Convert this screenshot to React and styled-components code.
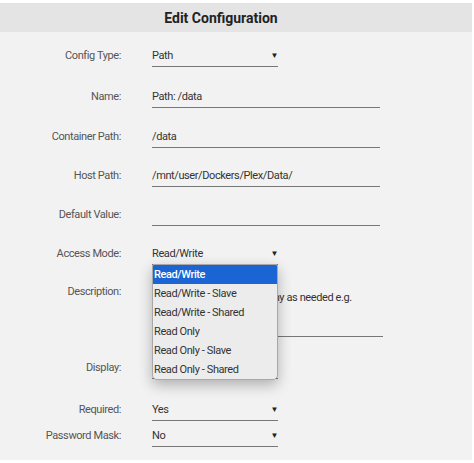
import React from 'react';
import styled, {createGlobalStyle} from 'styled-components';


const Global = createGlobalStyle`
  html, body {
    margin: 0;
    background: #fff;
  }
  body {
    font-family: Roboto, 'Liberation Sans', sans-serif;
    font-size: 11px;
    letter-spacing: -0.4px;
  }
`;

const Panel = styled.div`
  margin: 3px 2px 0 0;
  height: 457px;
  background: #f2f2f2;
  box-sizing: border-box;
`;

const Header = styled.div`
  height: 29px;
  background: #e4e4e4;
  display: flex;
  align-items: center;
  justify-content: center;
  padding-right: 30px;
  font-size: 14px;
  font-weight: 700;
  letter-spacing: 0;
  color: #222;
`;

const Form = styled.div`
  padding-top: 15px;
  display: flex;
  flex-direction: column;
`;

const Row = styled.div`
  display: grid;
  grid-template-columns: 121px 1fr;
  column-gap: 31px;
  align-items: start;
  margin-top: ${p => p.$gap || 0}px;
`;

const Label = styled.div`
  text-align: right;
  color: #555;
  line-height: 14px;
  padding-top: 2px;
`;

const Field = styled.div`
  position: relative;
  box-sizing: border-box;
  width: ${p => p.$w || 126}px;
  height: ${p => p.$h || 20}px;
  border-bottom: 1px solid #777;
  display: flex;
  align-items: flex-start;
  justify-content: space-between;
  padding-top: 2px;
  color: #333;
  line-height: 14px;
  white-space: nowrap;
`;

const Arrow = styled.span`
  font-size: 8px;
  color: #222;
  line-height: 14px;
`;

const Desc = styled.div`
  padding-top: 6px;
  color: #333;
  line-height: 14px;
`;

const Menu = styled.div`
  position: absolute;
  top: 19px;
  left: 0;
  width: 126px;
  box-sizing: border-box;
  background: #ececec;
  border: 1px solid #a8a8a8;
  border-radius: 2px 2px 5px 5px;
  box-shadow: 0 5px 14px rgba(0, 0, 0, 0.28);
  z-index: 2;
  overflow: hidden;
`;

const Option = styled.div`
  height: 19px;
  line-height: 19px;
  padding-left: 1px;
  color: ${p => (p.$on ? '#fff' : '#333')};
  background: ${p => (p.$on ? '#1b64d4' : 'transparent')};
  font-weight: ${p => (p.$on ? 500 : 400)};
`;

const modes = [
  'Read/Write',
  'Read/Write - Slave',
  'Read/Write - Shared',
  'Read Only',
  'Read Only - Slave',
  'Read Only - Shared',
];

const Select = ({value, children}) =>
  <Field>
    <span>{value}</span>
    <Arrow>▼</Arrow>
    {children}
  </Field>;

const App = () =>
  <>
    <Global />
    <Panel>
      <Header>Edit Configuration</Header>
      <Form>
        <Row>
          <Label>Config Type:</Label>
          <Select value='Path' />
        </Row>
        <Row $gap={21}>
          <Label>Name:</Label>
          <Field $w={228}>Path: /data</Field>
        </Row>
        <Row $gap={20}>
          <Label>Container Path:</Label>
          <Field $w={228}>/data</Field>
        </Row>
        <Row $gap={19}>
          <Label>Host Path:</Label>
          <Field $w={228}>/mnt/user/Dockers/Plex/Data/</Field>
        </Row>
        <Row $gap={19}>
          <Label>Default Value:</Label>
          <Field $w={228} />
        </Row>
        <Row $gap={19}>
          <Label>Access Mode:</Label>
          <Select value='Read/Write'>
            <Menu>
              {modes.map((m, i) =>
                <Option key={m} $on={i === 0}>{m}</Option>
              )}
            </Menu>
          </Select>
        </Row>
        <Row $gap={18}>
          <Label>Description:</Label>
          <Field $w={231} $h={54}>
            <Desc>A path to share. Add as many as needed e.g.</Desc>
          </Field>
        </Row>
        <Row $gap={22}>
          <Label>Display:</Label>
          <Select value='' />
        </Row>
        <Row $gap={22}>
          <Label>Required:</Label>
          <Select value='Yes' />
        </Row>
        <Row $gap={6}>
          <Label>Password Mask:</Label>
          <Select value='No' />
        </Row>
      </Form>
    </Panel>
  </>;

export default App;
